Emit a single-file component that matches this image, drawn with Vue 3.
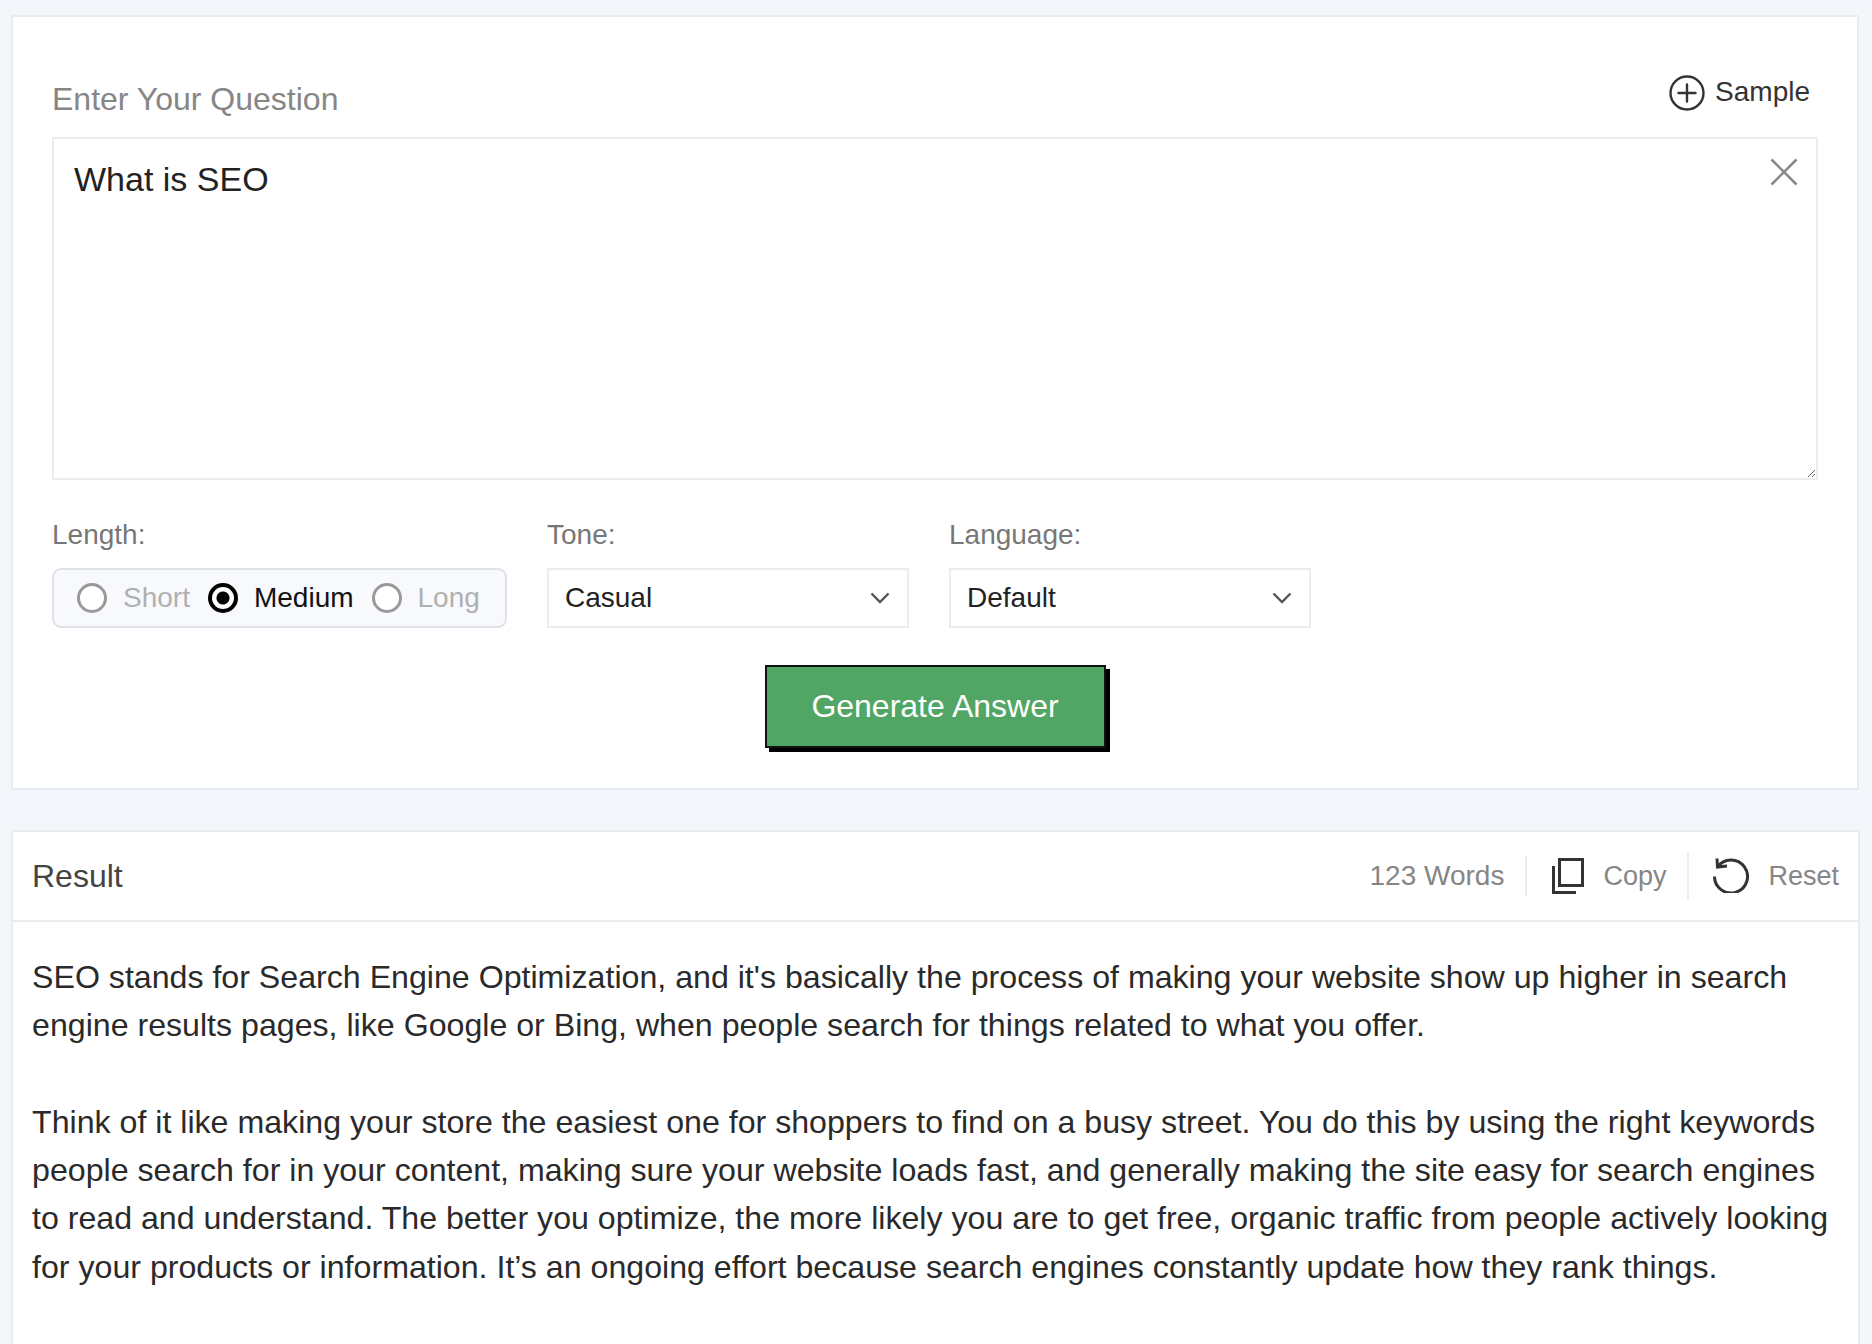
<template>
  <div class="page">
    <!-- input card -->
    <section class="card input-card">
      <div class="head-row">
        <label class="question-label" for="question">Enter Your Question</label>
        <button class="sample-btn" type="button">
          <svg class="sample-icon" width="36" height="36" viewBox="0 0 36 36" fill="none" stroke="#333" stroke-width="2.4">
            <circle cx="18" cy="18" r="16.5" />
            <path d="M18 9.5v17M9.5 18h17" stroke-linecap="round" />
          </svg>
          <span class="sample-text">Sample</span>
        </button>
      </div>

      <div class="question-wrap">
        <textarea id="question" v-model="question" class="question"></textarea>
        <svg class="clear-icon" width="28" height="28" viewBox="0 0 28 28" fill="none" stroke="#8a8a8a" stroke-width="2.6">
          <path d="M1.5 1.5l25 25M26.5 1.5l-25 25" />
        </svg>
      </div>

      <div class="filters">
        <div class="field">
          <div class="field-label">Length:</div>
          <div class="radio-group">
            <label v-for="opt in lengths" :key="opt" class="radio-item" :class="{ active: length === opt }">
              <input v-model="length" type="radio" name="length" :value="opt" />
              {{ opt }}
            </label>
          </div>
        </div>
        <div v-for="sel in selects" :key="sel.label" class="field">
          <div class="field-label">{{ sel.label }}</div>
          <div class="select-wrap">
            <select class="select">
              <option>{{ sel.value }}</option>
            </select>
            <svg class="chevron" width="20" height="12" viewBox="0 0 20 12" fill="none" stroke="#555" stroke-width="2.4">
              <path d="M1.5 1.5l8.5 8.5 8.5-8.5" />
            </svg>
          </div>
        </div>
      </div>

      <div class="action">
        <button class="generate" type="button">Generate Answer</button>
      </div>
    </section>

    <!-- result card -->
    <section class="card result-card">
      <header class="result-head">
        <div class="result-title">Result</div>
        <div class="result-tools">
          <span class="count">123 Words</span>
          <span class="divider"></span>
          <button class="tool copy" type="button">
            <svg width="32" height="36" viewBox="0 0 32 36" fill="none" stroke="#333" stroke-width="3">
              <rect x="7.5" y="1.5" width="23" height="26" />
              <path d="M1.5 8v26.5H24" />
            </svg>
            Copy
          </button>
          <span class="divider tall"></span>
          <button class="tool reset" type="button">
            <svg class="reset-icon" width="36" height="36" viewBox="0 0 36 36" fill="none" stroke="#333" stroke-width="3">
              <path d="M4.5 10A16.5 16.5 0 1 1 1.5 19.5" />
              <path d="M4 1.5l.5 8.5 9.5-1" />
            </svg>
            Reset
          </button>
        </div>
      </header>
      <div class="result-body">
        <p>SEO stands for Search Engine Optimization, and it's basically the process of making your website show up higher in search engine results pages, like Google or Bing, when people search for things related to what you offer.</p>
        <p>Think of it like making your store the easiest one for shoppers to find on a busy street. You do this by using the right keywords people search for in your content, making sure your website loads fast, and generally making the site easy for search engines to read and understand. The better you optimize, the more likely you are to get free, organic traffic from people actively looking for your products or information. It’s an ongoing effort because search engines constantly update how they rank things.</p>
      </div>
    </section>
  </div>
</template>

<script setup>
import { ref } from 'vue'

const question = ref('What is SEO')
const length = ref('Medium')
const lengths = ['Short', 'Medium', 'Long']
const selects = [
  { label: 'Tone:', value: 'Casual' },
  { label: 'Language:', value: 'Default' }
]
</script>

<style scoped>
.page {
  padding: 15px 13px 0 11px;
  font-family: "Liberation Sans", Arial, sans-serif;
  height: 1344px;
  box-sizing: border-box;
  overflow: hidden;
}

.card {
  background: #fff;
  border: 2px solid #e9ecef;
}

.input-card {
  padding: 50px 39px 40px 39px;
}

.head-row {
  display: flex;
  justify-content: space-between;
  align-items: flex-start;
  height: 70px;
}

.question-label {
  font-size: 32px;
  line-height: 36px;
  color: #868686;
  margin-top: 14px;
}

.sample-btn {
  display: flex;
  align-items: center;
  gap: 10px;
  margin: 8px 8px 0 0;
  padding: 0;
  background: none;
  border: none;
  font: inherit;
  font-size: 28px;
  line-height: 36px;
  color: #333;
}

.sample-text {
  margin-top: -2px;
}

.question-wrap {
  position: relative;
}

.question {
  display: block;
  box-sizing: border-box;
  width: 100%;
  height: 343px;
  padding: 20px;
  border: 2px solid #ececec;
  outline: none;
  font-family: inherit;
  font-size: 34px;
  line-height: 40px;
  color: #222;
  background: #fff;
}

.clear-icon {
  position: absolute;
  top: 21px;
  right: 20px;
}

.filters {
  display: flex;
  gap: 40px;
  margin-top: 37px;
}

.field-label {
  font-size: 28px;
  line-height: 36px;
  color: #777;
  margin-bottom: 15px;
}

.radio-group {
  box-sizing: border-box;
  display: flex;
  align-items: center;
  gap: 18px;
  width: 455px;
  height: 60px;
  padding: 0 23px;
  background: #f8f9fc;
  border: 2px solid #dfe2e6;
  border-radius: 9px;
}

.radio-item {
  display: flex;
  align-items: center;
  gap: 16px;
  font-size: 28px;
  color: #b0b0b0;
}

.radio-item.active {
  color: #111;
}

.radio-item input {
  appearance: none;
  box-sizing: border-box;
  width: 30px;
  height: 30px;
  margin: 0;
  border: 3px solid #999;
  border-radius: 50%;
  background: #fff;
}

.radio-item input:checked {
  border: 4px solid #000;
  background: radial-gradient(circle, #000 0 6px, #fff 7px);
}

.select-wrap {
  position: relative;
  width: 362px;
}

.select {
  appearance: none;
  display: block;
  box-sizing: border-box;
  width: 100%;
  height: 60px;
  padding: 0 16px 2px;
  border: 2px solid #ececec;
  border-radius: 0;
  background: #fff;
  font-family: inherit;
  font-size: 28px;
  color: #222;
  outline: none;
}

.chevron {
  position: absolute;
  top: 24px;
  right: 19px;
  pointer-events: none;
}

.action {
  display: flex;
  justify-content: center;
  margin-top: 37px;
}

.generate {
  box-sizing: border-box;
  width: 341px;
  height: 83px;
  padding: 0;
  background: #52a665;
  border: 2px solid #111;
  box-shadow: 4px 4px 0 #000;
  color: #fff;
  font-family: inherit;
  font-size: 32px;
}

.result-card {
  margin-top: 40px;
  margin-right: -1px;
  min-height: 600px;
}

.result-head {
  display: flex;
  justify-content: space-between;
  align-items: center;
  height: 88px;
  padding: 0 19px;
  border-bottom: 2px solid #e9ecef;
}

.result-title {
  font-size: 32px;
  color: #444;
}

.result-tools {
  display: flex;
  align-items: center;
  font-size: 28px;
  color: #868686;
}

.divider {
  width: 2px;
  height: 40px;
  margin: 0 25px 0 21px;
  background: #ececec;
}

.divider.tall {
  height: 48px;
  margin: 0 24px 0 21px;
}

.tool {
  display: flex;
  align-items: center;
  gap: 19px;
  padding: 0;
  background: none;
  border: none;
  font: inherit;
  font-size: 27px;
  color: inherit;
}

.reset-icon {
  margin-top: -2px;
}

.result-body {
  padding: 31px 19px 0;
  font-size: 32.15px;
  line-height: 48.35px;
  color: #2a2a2a;
}

.result-body p {
  margin: 0 0 48px;
}
</style>

<style>
html, body {
  background: #f3f6fb;
}
</style>
